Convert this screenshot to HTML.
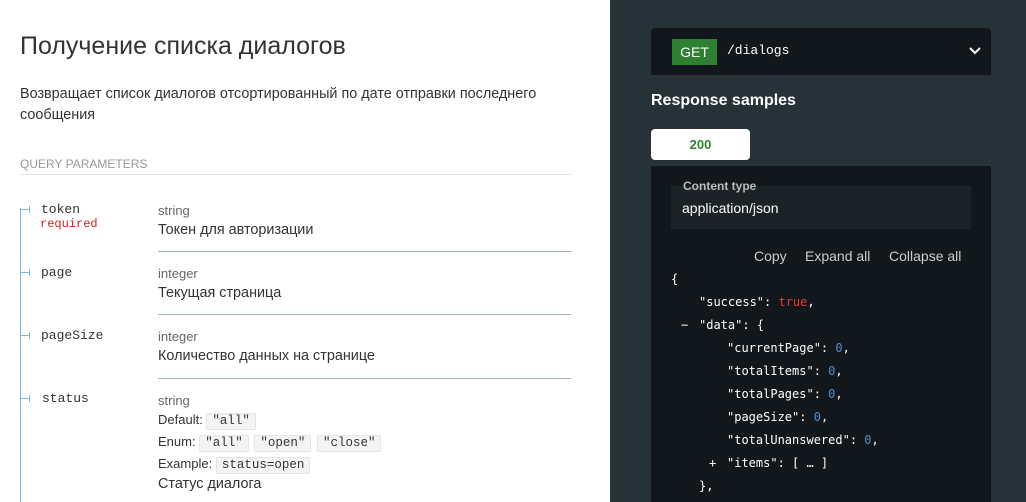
<!DOCTYPE html>
<html><head><meta charset="utf-8"><style>
*{margin:0;padding:0;box-sizing:border-box}
body{width:1026px;height:502px;overflow:hidden;position:relative;font-family:"Liberation Sans","DejaVu Sans",sans-serif;background:#fff;color:#333}
.a{position:absolute;white-space:nowrap}
.mono{font-family:"Liberation Mono",monospace}
.right{position:absolute;left:610px;top:0;width:416px;height:502px;background:#263238}
.code{font-family:"DejaVu Sans Mono",monospace;font-size:12px;color:#fff}
.chip{display:inline-block;background:#f4f4f4;border:1px solid #e5e5e5;border-radius:2px;font-family:"Liberation Mono",monospace;font-size:12.5px;padding:0 5px;color:#333;line-height:15px;margin-right:2px}
.hr{position:absolute;left:158px;width:413px;height:1px;background:#9fb4be}
.tick{position:absolute;left:20px;width:10px;height:1px;background:#7cb7e7}
.tick:after{content:"";position:absolute;right:0;top:-3px;width:1px;height:7px;background:#7cb7e7}
.n{color:#4f8fc8}
</style></head><body>
<div class="a" style="left:20px;top:32px;font-size:25px;color:#333;font-weight:300">Получение списка диалогов</div>
<div class="a" style="left:20px;top:84px;font-size:14.4px;line-height:21px;white-space:normal;width:545px">Возвращает список диалогов отсортированный по дате отправки последнего сообщения</div>
<div class="a" style="left:20px;top:157px;font-size:12px;color:#999">QUERY PARAMETERS</div>
<div style="position:absolute;left:20px;top:174px;width:551px;height:1px;background:#e1e5e8"></div>
<div style="position:absolute;left:20px;top:208px;width:1px;height:294px;background:#7cb7e7"></div>
<div class="tick" style="top:209px"></div><div class="tick" style="top:272px"></div><div class="tick" style="top:335px"></div><div class="tick" style="top:398px"></div>
<div class="a mono" style="left:41px;top:202px;font-size:13px">token</div>
<div class="a mono" style="left:40px;top:217px;font-size:12px;color:#d41f1c">required</div>
<div class="a mono" style="left:41px;top:265px;font-size:13px">page</div>
<div class="a mono" style="left:41px;top:328px;font-size:13px">pageSize</div>
<div class="a mono" style="left:42px;top:391px;font-size:13px">status</div>
<div class="a" style="left:158px;top:203px;font-size:13px;color:#666">string</div>
<div class="a" style="left:158px;top:222px;font-size:14.4px">Токен для авторизации</div>
<div class="hr" style="top:251px"></div>
<div class="a" style="left:158px;top:266px;font-size:13px;color:#666">integer</div>
<div class="a" style="left:158px;top:285px;font-size:14.4px">Текущая страница</div>
<div class="hr" style="top:314px"></div>
<div class="a" style="left:158px;top:329px;font-size:13px;color:#666">integer</div>
<div class="a" style="left:158px;top:348px;font-size:14.4px">Количество данных на странице</div>
<div class="hr" style="top:378px"></div>
<div class="a" style="left:158px;top:393px;font-size:13px;color:#666">string</div>
<div class="a" style="left:158px;top:412px;font-size:13px">Default: <span class="chip">"all"</span></div>
<div class="a" style="left:158px;top:434px;font-size:13px">Enum: <span class="chip">"all"</span> <span class="chip">"open"</span> <span class="chip">"close"</span></div>
<div class="a" style="left:158px;top:456px;font-size:13px">Example: <span class="chip">status=open</span></div>
<div class="a" style="left:158px;top:476px;font-size:14.4px">Статус диалога</div>

<div class="right"></div>
<div style="position:absolute;left:651px;top:28px;width:340px;height:47px;background:#11171a;border-radius:4px 4px 0 0"></div>
<div class="a" style="left:672px;top:39px;width:45px;height:26px;background:#2f8132;color:#fff;font-size:14px;line-height:26px;text-align:center">GET</div>
<div class="a mono" style="left:727px;top:43px;font-size:13px;color:#fff">/dialogs</div>
<svg class="a" style="left:968px;top:46px" width="14" height="10"><path d="M2 2l5 5 5-5" stroke="#fff" stroke-width="2" fill="none"/></svg>
<div class="a" style="left:651px;top:92px;font-size:16px;font-weight:bold;color:#fff">Response samples</div>
<div class="a" style="left:651px;top:129px;width:99px;height:31px;background:#fff;border-radius:4px;color:#2f8132;font-size:13px;font-weight:bold;text-align:center;line-height:31px">200</div>
<div style="position:absolute;left:651px;top:166px;width:340px;height:336px;background:#11171a"></div>
<div style="position:absolute;left:671px;top:186px;width:300px;height:43px;background:#1c2327"></div>
<div class="a" style="left:683px;top:179px;font-size:12px;font-weight:bold;color:#bbb">Content type</div>
<div class="a" style="left:682px;top:200px;font-size:14px;color:#fff">application/json</div>
<div class="a" style="left:754px;top:248px;font-size:14px;color:#ccc">Copy</div>
<div class="a" style="left:805px;top:248px;font-size:14px;color:#ccc">Expand all</div>
<div class="a" style="left:889px;top:248px;font-size:14px;color:#ccc">Collapse all</div>
<div class="a code" style="left:671px;top:272px">{</div>
<div class="a code" style="left:699px;top:295px">"success": <span style="color:#e53935">true</span>,</div>
<div class="a code" style="left:681px;top:318px">−</div>
<div class="a code" style="left:699px;top:318px">"data": {</div>
<div class="a code" style="left:727px;top:341px">"currentPage": <span class="n">0</span>,</div>
<div class="a code" style="left:727px;top:364px">"totalItems": <span class="n">0</span>,</div>
<div class="a code" style="left:727px;top:387px">"totalPages": <span class="n">0</span>,</div>
<div class="a code" style="left:727px;top:410px">"pageSize": <span class="n">0</span>,</div>
<div class="a code" style="left:727px;top:433px">"totalUnanswered": <span class="n">0</span>,</div>
<div class="a code" style="left:709px;top:456px">+</div>
<div class="a code" style="left:727px;top:456px">"items": [ … ]</div>
<div class="a code" style="left:699px;top:479px">},</div>
</body></html>
